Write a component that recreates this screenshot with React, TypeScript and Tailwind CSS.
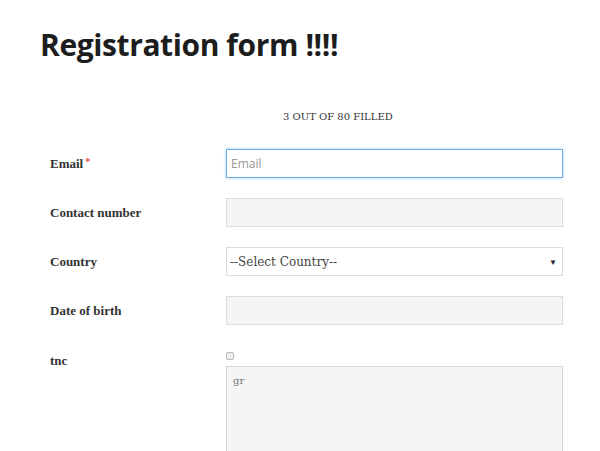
import React from "react";

const labelCls = "w-[176px] shrink-0 text-[13px] font-bold text-[#333] font-['Liberation_Serif',serif] pt-[5px]";
const inputCls = "w-[337px] h-[29px] border border-[#dcdcdc] bg-[#f5f5f5] px-[6px] text-[12px] outline-none";

export default function App() {
  return (
    <div className="bg-white w-[600px] h-[451px] overflow-hidden">
      <h1 className="pl-[40px] pt-[27px] text-[30px] leading-[36px] font-bold text-[#1d1d1d] font-['Open_Sans',sans-serif] tracking-[-0.4px]">
        Registration form !!!!
      </h1>
      <p className="mt-[47px] pl-[283px] text-[10px] leading-[14px] text-[#333] font-['DejaVu_Serif',serif]">
        3 OUT OF 80 FILLED
      </p>
      <form className="ml-[50px] mt-[25px] flex flex-col gap-[20px]">
        <div className="flex">
          <label className={labelCls}>
            Email<span className="text-[#e74c3c] align-top text-[10px] ml-[2px]">*</span>
          </label>
          <input
            placeholder="Email"
            className="w-[337px] h-[29px] border border-[#69aee6] bg-white px-[4px] text-[12px] text-[#555] placeholder:text-[#999] outline-none shadow-[0_0_3px_rgba(102,175,233,0.6)] font-['Open_Sans',sans-serif]"
          />
        </div>
        <div className="flex">
          <label className={labelCls}>Contact number</label>
          <input className={inputCls} />
        </div>
        <div className="flex">
          <label className={labelCls}>Country</label>
          <div className="relative w-[337px] h-[29px] border border-[#dcdcdc] bg-white flex items-center px-[3px]">
            <span className="text-[12px] text-[#444] font-['DejaVu_Serif',serif]">--Select Country--</span>
            <span className="absolute right-[5px] top-[8px] text-[8px] text-[#222]">▼</span>
          </div>
        </div>
        <div className="flex">
          <label className={labelCls}>Date of birth</label>
          <input className={inputCls} />
        </div>
        <div className="flex">
          <label className={labelCls + " !pt-[6px]"}>tnc</label>
          <div className="flex flex-col">
            <div className="h-[8px] w-[8px] mt-[7px] border border-[#bbb] bg-[#eee] rounded-[2px]" />
            <div className="mt-[6px] w-[337px] h-[100px] border border-[#d6d6d6] bg-[#f5f5f5] px-[6px] pt-[6px] text-[10px] text-[#777] font-['DejaVu_Serif',serif]">
              gr
            </div>
          </div>
        </div>
      </form>
    </div>
  );
}
